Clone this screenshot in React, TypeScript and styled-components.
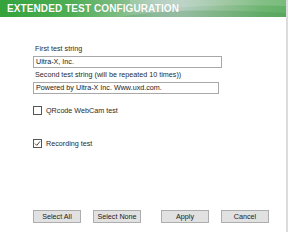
import React from 'react';
import styled, { createGlobalStyle } from 'styled-components';

const GlobalStyle = createGlobalStyle`
  html, body {
    margin: 0;
    padding: 0;
    background: #fff;
  }
  body {
    font-family: 'Liberation Sans', Arial, sans-serif;
  }
`;

const Window = styled.div`
  width: 288px;
  height: 232px;
  box-sizing: border-box;
  border-right: 2px solid #dcdcdc;
  background: #fff;
  display: flex;
  flex-direction: column;
  overflow: hidden;
`;

const Header = styled.div`
  position: relative;
  height: 17px;
  display: flex;
  align-items: center;
  padding-left: 7px;
  background: linear-gradient(
    90deg,
    #34a33c 0%,
    #4fae55 25%,
    #7fbd85 42%,
    #aac8b8 55%,
    #b2cdbf 64%,
    #92c096 78%,
    #6db570 92%,
    #62b066 100%
  );
  overflow: hidden;
`;

const Swoosh = styled.svg`
  position: absolute;
  left: 0;
  top: 0;
  width: 286px;
  height: 17px;
`;

const Title = styled.div`
  position: relative;
  color: #fff;
  font-weight: bold;
  font-size: 10px;
  letter-spacing: 0.1px;
  text-shadow: 0 0 1px rgba(0, 0, 0, 0.15);
`;

const Body = styled.div`
  flex: 1;
  display: flex;
  flex-direction: column;
  padding: 27px 0 0 33px;
`;

const Label = styled.div`
  font-size: 7.2px;
  color: #2a2a2a;
  height: 10px;
  line-height: 10px;
  padding-left: 2px;
`;

const Field = styled.div<{ $width: number }>`
  width: ${(p) => p.$width}px;
  height: 12px;
  box-sizing: border-box;
  border: 1px solid #a8a8a8;
  font-size: 7.2px;
  color: #1a1a1a;
  line-height: 10px;
  padding-left: 2px;
  margin: 2px 0 2px;
  white-space: nowrap;
  overflow: hidden;
`;

const CheckRow = styled.label<{ $top: number }>`
  display: flex;
  align-items: center;
  gap: 4px;
  height: 9px;
  margin-top: ${(p) => p.$top}px;
  font-size: 7.2px;
  color: #2a2a2a;
`;

const Box = styled.span`
  width: 9px;
  height: 9px;
  box-sizing: border-box;
  border: 1px solid #555;
  display: flex;
  align-items: center;
  justify-content: center;
  background: #fff;
`;

const Buttons = styled.div`
  margin-top: auto;
  margin-bottom: 9px;
  display: flex;
  gap: 12px;
`;

const Button = styled.button<{ $gap?: number }>`
  width: 48px;
  height: 13px;
  padding: 0;
  margin-left: ${(p) => p.$gap ?? 0}px;
  box-sizing: border-box;
  border: 1px solid #adadad;
  background: #e1e1e1;
  font-family: 'Liberation Sans', Arial, sans-serif;
  font-size: 7.2px;
  color: #1a1a1a;
`;

const Check = ({ checked }: { checked?: boolean }) => (
  <Box>
    {checked ? (
      <svg width="7" height="7" viewBox="0 0 7 7">
        <path d="M1 3.6 L2.8 5.4 L6 1.4" fill="none" stroke="#333" strokeWidth="0.9" />
      </svg>
    ) : null}
  </Box>
);

export default function App() {
  return (
    <>
      <GlobalStyle />
      <Window>
        <Header>
          <Swoosh viewBox="0 0 286 17" preserveAspectRatio="none">
            <path d="M120 17 C170 8 230 10 286 13 L286 17 Z" fill="rgba(60,140,70,0.25)" />
            <path d="M130 0 L286 0 L286 6 C230 4 180 6 130 12 Z" fill="rgba(255,255,255,0.15)" />
          </Swoosh>
          <Title>EXTENDED TEST CONFIGURATION</Title>
        </Header>
        <Body>
          <Label>First test string</Label>
          <Field $width={189}>Ultra-X, Inc.</Field>
          <Label>Second test string (will be repeated 10 times))</Label>
          <Field $width={186}>Powered by Ultra-X Inc. Www.uxd.com.</Field>
          <CheckRow $top={10}>
            <Check />
            QRcode WebCam test
          </CheckRow>
          <CheckRow $top={24}>
            <Check checked />
            Recording test
          </CheckRow>
          <Buttons>
            <Button>Select All</Button>
            <Button>Select None</Button>
            <Button $gap={8}>Apply</Button>
            <Button>Cancel</Button>
          </Buttons>
        </Body>
      </Window>
    </>
  );
}
